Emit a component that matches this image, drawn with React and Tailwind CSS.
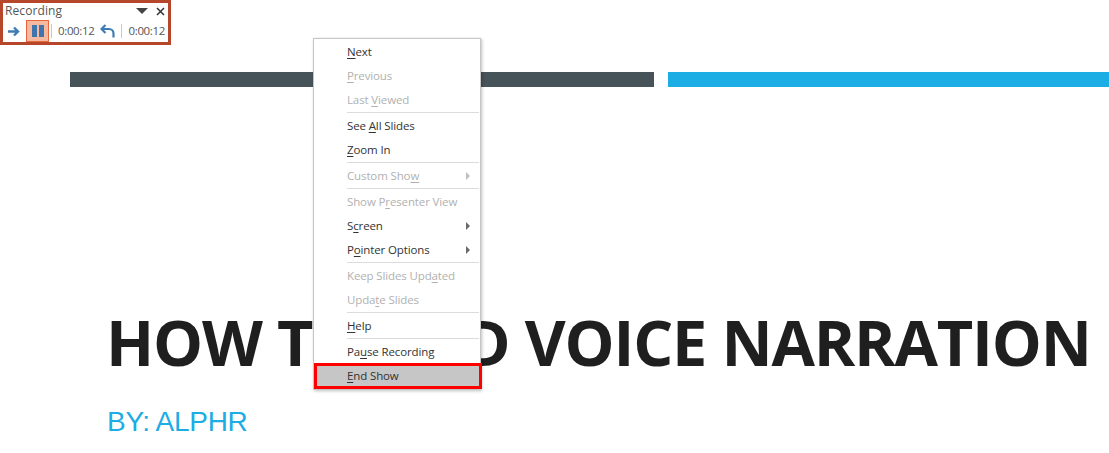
function Sep() {
  return <div className="h-[2px] pl-[33px] pr-[1px]"><div className="h-px bg-[#dcdcdc]" /></div>;
}

function Item({ children, disabled, arrow, active }) {
  return (
    <div className={`relative h-6 flex items-center pl-[33px] text-[11.5px] tracking-[-0.13px] ${disabled ? "text-[#b1b1b1]" : "text-[#333333]"} ${active ? "bg-[#c6c6c6]" : ""}`}>
      <span>{children}</span>
      {arrow && (
        <span className={`absolute right-[10px] top-[8px] w-0 h-0 border-y-[4px] border-y-transparent border-l-[4px] ${disabled ? "border-l-[#c0c0c0]" : "border-l-[#6a6a6a]"}`} />
      )}
    </div>
  );
}

function U({ children }) {
  return <span className="underline underline-offset-2">{children}</span>;
}

function Recorder() {
  return (
    <div className="absolute left-0 top-0 w-[171px] h-[45px] border-[3px] border-[#b7472a] bg-white font-['Open_Sans',sans-serif] text-[11.5px] tracking-[-0.35px] text-[#555]">
      <div className="flex items-center justify-between h-[16px] pl-[2px] pr-[3px]">
        <span className="text-[12px] text-[#555] tracking-[0.1px]">Recording</span>
        <div className="flex items-center gap-[8px]">
          <span className="w-0 h-0 border-x-[6px] border-x-transparent border-t-[6px] border-t-[#444]" />
          <svg width="9" height="9" viewBox="0 0 9 9"><path d="M1 1l7 7M8 1L1 8" stroke="#333" strokeWidth="1.5" /></svg>
        </div>
      </div>
      <div className="flex items-center h-[22px] pl-[5px] mt-[1px]">
        <svg width="12" height="11" viewBox="0 0 12 11" className="mr-[6px]">
          <path d="M0 5.5h9.5M6 1.5L10 5.5L6 9.5" fill="none" stroke="#3f7cb5" strokeWidth="2.4" />
        </svg>
        <div className="w-[23px] h-[22px] border border-[#e8663c] bg-[#f5b99f] flex items-center justify-center gap-[2px]">
          <span className="w-[5px] h-[12px] bg-[#3f74ac]" />
          <span className="w-[5px] h-[12px] bg-[#3f74ac]" />
        </div>
        <span className="ml-[2px] w-px h-[14px] bg-[#c8c8c8]" />
        <span className="ml-[6px]">0:00:12</span>
        <svg width="15" height="15" viewBox="0 0 15 15" className="ml-[6px]">
          <path d="M5.5 1L1.5 5L5.5 9M2 5h7a4.5 4.5 0 0 1 4.5 4.5V13.5" fill="none" stroke="#3f7cb5" strokeWidth="2.2" />
        </svg>
        <span className="ml-[6px] w-px h-[14px] bg-[#c8c8c8]" />
        <span className="ml-[6px]">0:00:12</span>
      </div>
    </div>
  );
}

function Menu() {
  return (
    <div className="absolute left-[313px] top-[38px] w-[168px] border border-[#c6c6c6] bg-white shadow-[1px_1px_3px_rgba(0,0,0,0.25)] font-['Open_Sans',sans-serif] pt-[1px] pb-[1px]">
      <Item><U>N</U>ext</Item>
      <Item disabled><U>P</U>revious</Item>
      <Item disabled>Last <U>V</U>iewed</Item>
      <Sep />
      <Item>See <U>A</U>ll Slides</Item>
      <Item><U>Z</U>oom In</Item>
      <Sep />
      <Item disabled arrow>Custom Sho<U>w</U></Item>
      <Sep />
      <Item disabled>Show P<U>r</U>esenter View</Item>
      <Item arrow>S<U>c</U>reen</Item>
      <Item arrow>P<U>o</U>inter Options</Item>
      <Sep />
      <Item disabled>Keep Slides Upd<U>a</U>ted</Item>
      <Item disabled>Upda<U>t</U>e Slides</Item>
      <Sep />
      <Item><U>H</U>elp</Item>
      <Sep />
      <Item>Pa<U>u</U>se Recording</Item>
      <Item active><U>E</U>nd Show</Item>
      <div className="absolute left-0 right-[-2px] top-[324px] h-[26px] border-[3px] border-[#ff0000]" />
    </div>
  );
}

export default function App() {
  return (
    <div className="relative w-[1109px] h-[453px] overflow-hidden bg-white">
      <div className="flex gap-[14px] pl-[70px] pt-[72px]">
        <div className="w-[584px] h-[15px] bg-[#465359]" />
        <div className="flex-1 h-[15px] bg-[#1cade4]" />
      </div>
      <h1 className="mt-[211px] ml-[106px] whitespace-nowrap font-['Open_Sans',sans-serif] font-bold text-[63px] tracking-[-1.18px] leading-[88px] text-[#1f1f1f]">
        HOW TO ADD VOICE NARRATION
      </h1>
      <p className="mt-[18px] ml-[107px] font-['Liberation_Sans',sans-serif] text-[28px] tracking-[-0.3px] leading-[36px] text-[#1cade4]">
        BY: ALPHR
      </p>
      <Recorder />
      <Menu />
    </div>
  );
}
